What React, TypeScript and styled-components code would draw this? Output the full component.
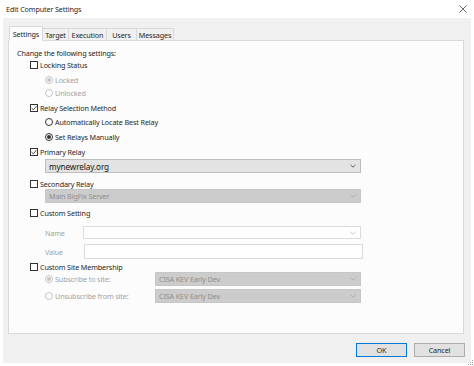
import React from 'react';
import styled, { createGlobalStyle } from 'styled-components';

const GlobalStyle = createGlobalStyle`
  html, body {
    margin: 0;
    padding: 0;
    background: #ffffff;
  }
  body {
    font-family: "Noto Sans", "Open Sans", sans-serif;
    font-size: 7.2px;
    letter-spacing: -0.12px;
    color: #262626;
  }
`;

const Window = styled.div`
  position: relative;
  width: 474px;
  height: 366px;
  box-sizing: border-box;
  padding: 0 3px 3px 3px;
  display: flex;
  flex-direction: column;
  background: #ffffff;
`;

const TitleBar = styled.div`
  height: 18px;
  display: flex;
  align-items: center;
  justify-content: space-between;
  padding: 0 4px 0 3px;
  color: #262626;
`;

const Body = styled.div`
  flex: 1;
  display: flex;
  flex-direction: column;
  background: #f0f0f0;
  padding: 8px 7px 0 5px;
`;

const TabStrip = styled.div`
  display: flex;
  align-items: flex-end;
  height: 15px;
  padding-left: 1px;
  margin-bottom: -1px;
  position: relative;
  z-index: 1;
`;

const Tab = styled.div<{ $active?: boolean; $w: number }>`
  box-sizing: border-box;
  width: ${(p) => p.$w}px;
  height: ${(p) => (p.$active ? 15 : 13)}px;
  margin-right: -1px;
  display: flex;
  align-items: center;
  justify-content: center;
  border: 1px solid #d9d9d9;
  border-bottom-color: ${(p) => (p.$active ? '#fcfcfc' : '#d9d9d9')};
  background: ${(p) => (p.$active ? '#fcfcfc' : '#f0f0f0')};
  color: #262626;
`;

const Panel = styled.div`
  flex: 1;
  background: #fcfcfc;
  border: 1px solid #d9d9d9;
  padding: 6px 0 0 8px;
`;

const Row = styled.div<{ $indent?: number; $mt?: number; $h?: number; $gap?: number }>`
  display: flex;
  align-items: center;
  height: ${(p) => p.$h ?? 12}px;
  margin-left: ${(p) => p.$indent ?? 0}px;
  margin-top: ${(p) => p.$mt ?? 0}px;
  gap: ${(p) => p.$gap ?? 2}px;
`;

const Label = styled.span<{ $disabled?: boolean; $w?: number }>`
  color: ${(p) => (p.$disabled ? '#a2a2a2' : '#262626')};
  white-space: nowrap;
  ${(p) => (p.$w ? `width: ${p.$w}px; flex-shrink: 0;` : '')}
`;

const Box = styled.div`
  width: 8px;
  height: 8px;
  box-sizing: border-box;
  border: 1px solid #333333;
  background: #ffffff;
  display: flex;
  align-items: center;
  justify-content: center;
`;

const Radio = styled.div<{ $disabled?: boolean; $on?: boolean }>`
  width: 8px;
  height: 8px;
  box-sizing: border-box;
  border-radius: 50%;
  border: 1px solid ${(p) => (p.$disabled ? '#c4c4c4' : '#333333')};
  background: #ffffff;
  display: flex;
  align-items: center;
  justify-content: center;
  &::after {
    content: '';
    display: ${(p) => (p.$on ? 'block' : 'none')};
    width: 4px;
    height: 4px;
    border-radius: 50%;
    background: ${(p) => (p.$disabled ? '#c4c4c4' : '#333333')};
  }
`;

type FieldKind = 'active' | 'disabled' | 'empty' | 'input';

const Field = styled.div<{ $kind: FieldKind; $w: number; $h: number }>`
  box-sizing: border-box;
  width: ${(p) => p.$w}px;
  height: ${(p) => p.$h}px;
  display: flex;
  align-items: center;
  justify-content: space-between;
  padding: 0 4px 0 3px;
  flex-shrink: 0;
  border: 1px solid
    ${(p) =>
      p.$kind === 'active' ? '#bdbdbd' : p.$kind === 'disabled' ? '#c6c6c6' : '#dcdcdc'};
  background: ${(p) =>
    p.$kind === 'active' ? '#e3e3e3' : p.$kind === 'disabled' ? '#cccccc' : '#ffffff'};
  color: ${(p) => (p.$kind === 'active' ? '#151515' : '#8e8e8e')};
  font-size: ${(p) => (p.$kind === 'active' ? 8.2 : 7.2)}px;
  white-space: nowrap;
`;

const Footer = styled.div`
  height: 29px;
  display: flex;
  justify-content: flex-end;
  align-items: flex-start;
  padding-top: 9px;
  box-sizing: border-box;
  gap: 7px;
  margin-right: -1px;
`;

const Button = styled.div<{ $primary?: boolean }>`
  box-sizing: border-box;
  width: 51px;
  height: 14px;
  display: flex;
  align-items: center;
  justify-content: center;
  background: #e1e1e1;
  border: 1px solid ${(p) => (p.$primary ? '#0078d7' : '#adadad')};
  color: #262626;
`;

const Grip = styled.svg`
  position: absolute;
  right: 1px;
  bottom: 1px;
`;

function Check() {
  return (
    <svg width="6" height="6" viewBox="0 0 6 6">
      <path d="M0.6 3.2 L2.3 4.8 L5.4 1.2" fill="none" stroke="#333" strokeWidth="0.9" />
    </svg>
  );
}

function Chevron({ color }: { color: string }) {
  return (
    <svg width="6" height="4" viewBox="0 0 6 4">
      <path d="M0.5 0.8 L3 3.2 L5.5 0.8" fill="none" stroke={color} strokeWidth="0.9" />
    </svg>
  );
}

function CheckRow({ label, checked, mt }: { label: string; checked?: boolean; mt: number }) {
  return (
    <Row $indent={13} $mt={mt}>
      <Box>{checked && <Check />}</Box>
      <Label>{label}</Label>
    </Row>
  );
}

function RadioRow({
  label,
  on,
  disabled,
  mt,
}: {
  label: string;
  on?: boolean;
  disabled?: boolean;
  mt: number;
}) {
  return (
    <Row $indent={28} $mt={mt}>
      <Radio $on={on} $disabled={disabled} />
      <Label $disabled={disabled}>{label}</Label>
    </Row>
  );
}

export default function App() {
  const tabs: [string, number][] = [
    ['Settings', 34],
    ['Target', 27],
    ['Execution', 39],
    ['Users', 31],
    ['Messages', 38],
  ];

  return (
    <>
      <GlobalStyle />
      <Window>
        <TitleBar>
          <span>Edit Computer Settings</span>
          <svg width="8" height="8" viewBox="0 0 8 8">
            <path d="M0.5 0.5 L7.5 7.5 M7.5 0.5 L0.5 7.5" stroke="#444" strokeWidth="0.8" />
          </svg>
        </TitleBar>
        <Body>
          <TabStrip>
            {tabs.map(([name, w], i) => (
              <Tab key={name} $w={w} $active={i === 0}>
                {name}
              </Tab>
            ))}
          </TabStrip>
          <Panel>
            <Row>
              <Label>Change the following settings:</Label>
            </Row>
            <CheckRow label="Locking Status" mt={0} />
            <RadioRow label="Locked" on disabled mt={3} />
            <RadioRow label="Unlocked" disabled mt={1} />
            <CheckRow label="Relay Selection Method" checked mt={3} />
            <RadioRow label="Automatically Locate Best Relay" mt={2} />
            <RadioRow label="Set Relays Manually" on mt={3} />
            <CheckRow label="Primary Relay" checked mt={3} />
            <Row $indent={28} $mt={1} $h={14}>
              <Field $kind="active" $w={316} $h={14}>
                <span>mynewrelay.org</span>
                <Chevron color="#555" />
              </Field>
            </Row>
            <CheckRow label="Secondary Relay" mt={5} />
            <Row $indent={28} $mt={-1} $h={14}>
              <Field $kind="disabled" $w={316} $h={14}>
                <span>Main BigFix Server</span>
                <Chevron color="#aaa" />
              </Field>
            </Row>
            <CheckRow label="Custom Setting" mt={4} />
            <Row $indent={28} $mt={7} $h={13} $gap={0}>
              <Label $disabled $w={38}>
                Name
              </Label>
              <Field $kind="empty" $w={278} $h={13}>
                <span />
                <Chevron color="#c2c2c2" />
              </Field>
            </Row>
            <Row $indent={28} $mt={5} $h={15} $gap={0}>
              <Label $disabled $w={39}>
                Value
              </Label>
              <Field $kind="input" $w={279} $h={15} />
            </Row>
            <CheckRow label="Custom Site Membership" mt={2} />
            <Row $indent={28} $mt={-1} $h={14}>
              <Radio $on $disabled />
              <Label $disabled $w={98}>
                Subscribe to site:
              </Label>
              <Field $kind="disabled" $w={206} $h={14}>
                <span>CISA KEV Early Dev</span>
                <Chevron color="#aaa" />
              </Field>
            </Row>
            <Row $indent={28} $mt={3} $h={14}>
              <Radio $disabled />
              <Label $disabled $w={98}>
                Unsubscribe from site:
              </Label>
              <Field $kind="disabled" $w={206} $h={14}>
                <span>CISA KEV Early Dev</span>
                <Chevron color="#aaa" />
              </Field>
            </Row>
          </Panel>
          <Footer>
            <Button $primary>OK</Button>
            <Button>Cancel</Button>
          </Footer>
        </Body>
        <Grip width="5" height="5" viewBox="0 0 5 5">
          <rect x="4" y="0" width="1" height="1" fill="#a0a0a0" />
          <rect x="2" y="2" width="1" height="1" fill="#a0a0a0" />
          <rect x="4" y="2" width="1" height="1" fill="#a0a0a0" />
          <rect x="0" y="4" width="1" height="1" fill="#a0a0a0" />
          <rect x="2" y="4" width="1" height="1" fill="#a0a0a0" />
          <rect x="4" y="4" width="1" height="1" fill="#a0a0a0" />
        </Grip>
      </Window>
    </>
  );
}
